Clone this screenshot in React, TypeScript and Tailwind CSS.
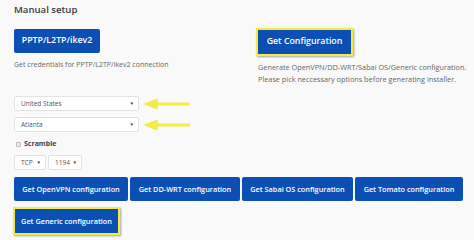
import React from "react";

function Arrow() {
  return (
    <svg width="46" height="12" viewBox="0 0 46 12" className="ml-[5px]">
      <path d="M12 6H45" stroke="#f3ec45" strokeWidth="3" strokeLinecap="round" />
      <path d="M1 6L13 1.5V10.5Z" fill="#f3ec45" stroke="#f3ec45" strokeWidth="1.5" strokeLinejoin="round" />
    </svg>
  );
}

function Select({ label, width }: { label: string; width: string }) {
  return (
    <div
      className={`${width} shrink-0 h-[15px] flex items-center justify-between bg-white border border-[#e2e2e2] rounded-[2px] pl-[6px] pr-[4px] text-[6.5px] text-[#555]`}
    >
      <span>{label}</span>
      <span className="text-[4.5px] text-[#333]">▼</span>
    </div>
  );
}

const btn =
  "h-[24px] shrink-0 flex items-center justify-center whitespace-nowrap bg-[#0c4fb4] text-white rounded-[2px] text-[7.3px] font-semibold";

export default function App() {
  return (
    <div
      className="w-[474px] h-[240px] bg-[#f9f9f9] px-[14px] overflow-hidden"
      style={{ fontFamily: '"Open Sans", "Noto Sans", sans-serif' }}
    >
      <div className="pt-[2px] h-[17px] text-[9.6px] font-semibold text-[#3a3a3a] leading-[16px]">Manual setup</div>

      <div className="flex mt-[12px]">
        <div className="w-[242px] shrink-0">
          <div className={`${btn} w-[86px] font-bold text-[8.8px]`}>PPTP/L2TP/ikev2</div>
          <div className="mt-[6px] text-[7px] leading-[12px] text-[#666]">
            Get credentials for PPTP/L2TP/ikev2 connection
          </div>
        </div>
        <div className="-mt-[1px] min-w-0">
          <div className="w-fit border-2 border-[#f2ec3e] shadow-[1px_1px_2px_rgba(0,0,0,0.35)]">
            <div className={`${btn} w-[93px] h-[22px] rounded-none font-bold text-[8.8px]`}>Get Configuration</div>
          </div>
          <div className="mt-[5px] pl-[2px] text-[7.3px] leading-[12px] text-[#666] whitespace-nowrap">
            Generate OpenVPN/DD-WRT/Sabai OS/Generic configuration.
            <br />
            Please pick neccessary options before generating installer.
          </div>
        </div>
      </div>

      <div className="mt-[11px] flex flex-col gap-[6px]">
        <div className="flex items-center">
          <Select label="United States" width="w-[125px]" />
          <Arrow />
        </div>
        <div className="flex items-center">
          <Select label="Atlanta" width="w-[125px]" />
          <Arrow />
        </div>
      </div>

      <div className="mt-[5px] flex items-center h-[14px] pl-[2px]">
        <div className="w-[5px] h-[5px] border border-[#bbb] bg-[#eee] rounded-[1px]" />
        <span className="ml-[3px] text-[7px] font-bold text-[#444]">Scramble</span>
      </div>

      <div className="mt-[4px] flex gap-[2px]">
        <Select label="TCP" width="w-[32px]" />
        <Select label="1194" width="w-[34px]" />
      </div>

      <div className="mt-[7px] flex gap-[2px]">
        <div className={`${btn} w-[114px]`}>Get OpenVPN configuration</div>
        <div className={`${btn} w-[110px]`}>Get DD-WRT configuration</div>
        <div className={`${btn} w-[111px]`}>Get Sabai OS configuration</div>
        <div className={`${btn} w-[108px]`}>Get Tomato configuration</div>
      </div>

      <div className="mt-[6px] -ml-[1px] w-fit border-2 border-[#f2ec3e] shadow-[1px_1px_2px_rgba(0,0,0,0.35)]">
        <div className={`${btn} w-[103px] h-[20px] rounded-none`}>Get Generic configuration</div>
      </div>
    </div>
  );
}
